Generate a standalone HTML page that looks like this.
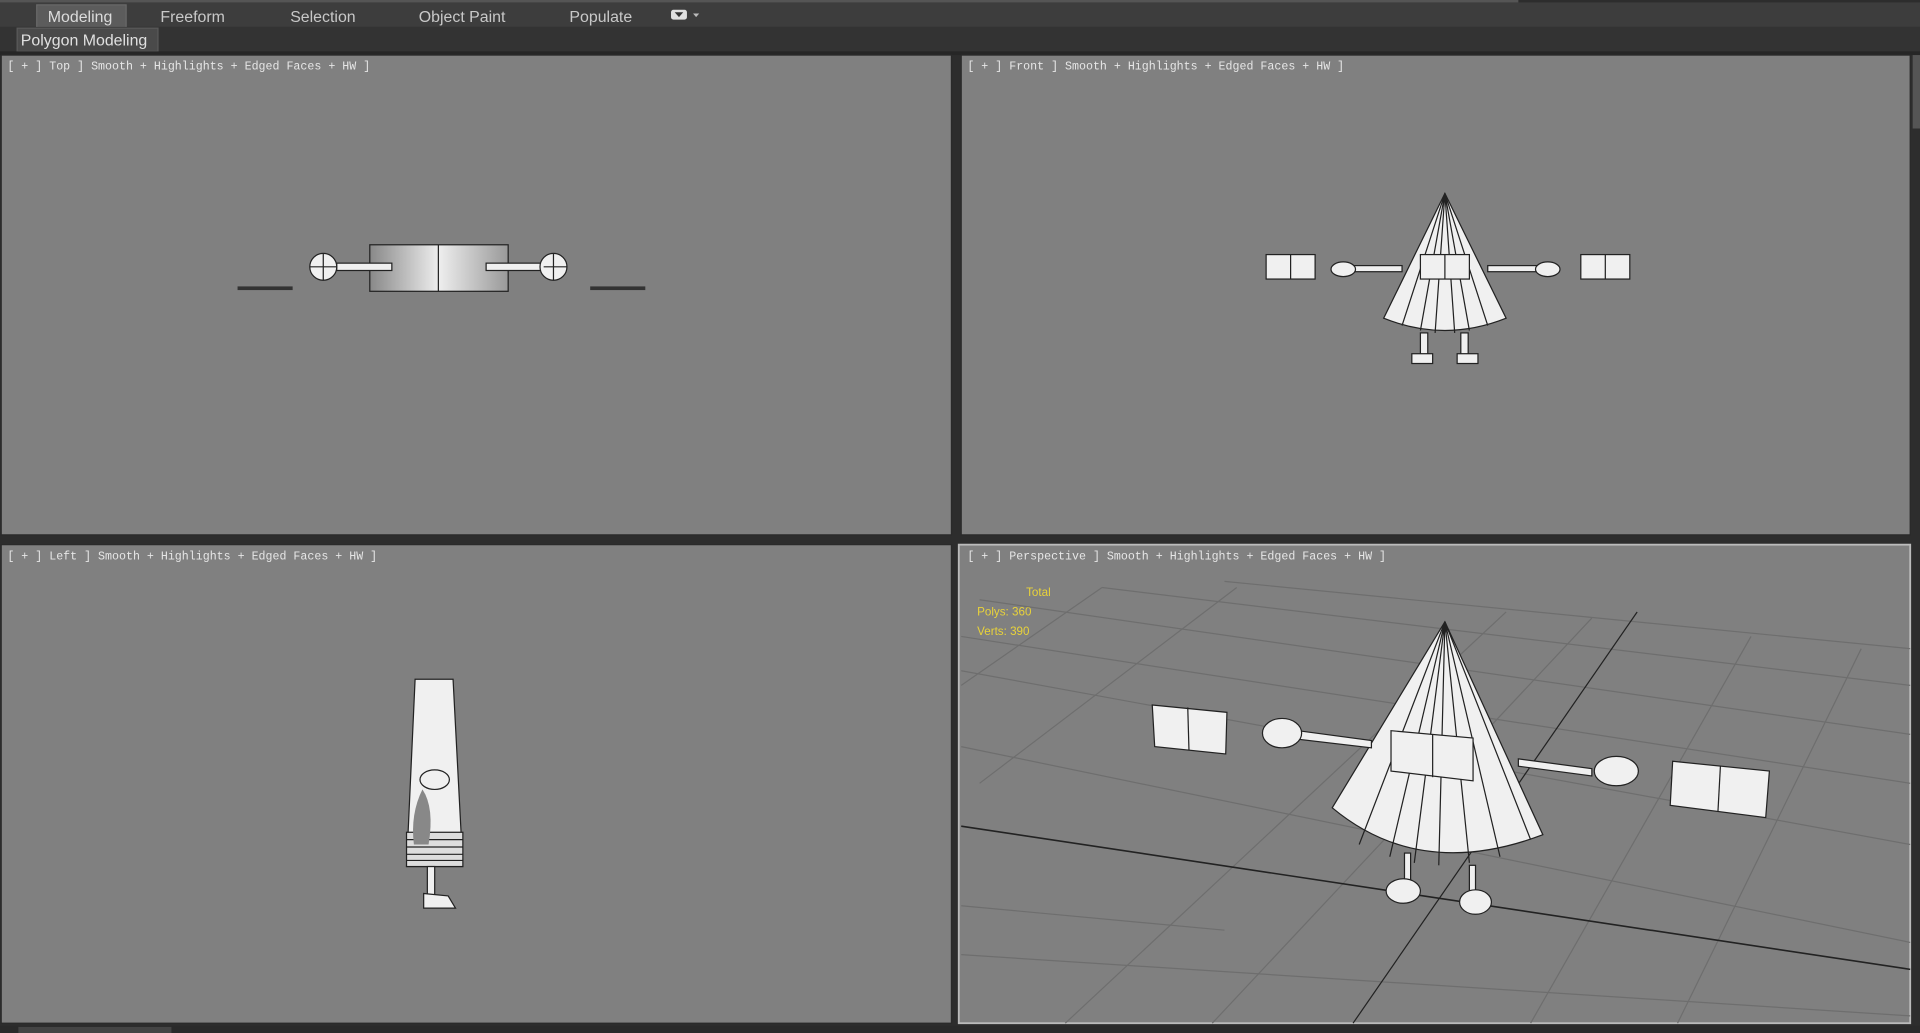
<!DOCTYPE html>
<html><head><meta charset="utf-8"><style>
html,body{margin:0;padding:0;background:#2e2e2e;overflow:hidden}
svg{display:block}
text{font-family:"Liberation Sans",sans-serif}
.lbl{font-family:"Liberation Mono",monospace;font-size:9.5px;fill:#e6e6e6}
.w{fill:#f0f0f0;stroke:#222;stroke-width:1}
.l{stroke:#222;stroke-width:1;fill:none}
.g{stroke:#6e6e6e;stroke-width:1;fill:none}
</style></head><body>
<svg width="1920" height="1033" viewBox="0 0 1568 844" preserveAspectRatio="none" xmlns="http://www.w3.org/2000/svg">
<rect width="1568" height="844" fill="#2d2d2d"/>
<!-- ribbon -->
<rect x="0" y="2" width="1568" height="20" fill="#3d3d3d"/>
<rect x="0" y="0" width="1240" height="2" fill="#555"/>
<rect x="30" y="4" width="73" height="19" fill="#5c5c5c" stroke="#6a6a6a"/>
<g font-size="13" fill="#c8c8c8">
<text x="39" y="18" fill="#dcdcdc">Modeling</text>
<text x="131" y="18">Freeform</text>
<text x="237" y="18">Selection</text>
<text x="342" y="18">Object Paint</text>
<text x="465" y="18">Populate</text>
</g>
<rect x="548" y="8" width="13" height="8" rx="2" fill="#e0e0e0"/>
<path d="M551 10 L558 10 L554.5 14Z" fill="#333"/>
<path d="M566 11 L571 11 L568.5 14Z" fill="#bbb"/>
<rect x="0" y="22" width="1568" height="20" fill="#333"/>
<rect x="14" y="23" width="115" height="19" fill="#4a4a4a" stroke="#5a5a5a"/>
<text x="17" y="37" font-size="13" fill="#e0e0e0">Polygon Modeling</text>
<rect x="0" y="42" width="1568" height="3" fill="#262626"/>
<!-- viewports -->
<rect x="1" y="45" width="776" height="392" fill="#808080" stroke="#2a2a2a"/>
<rect x="785" y="45" width="775" height="392" fill="#808080" stroke="#2a2a2a"/>
<rect x="1" y="445" width="776" height="391" fill="#808080" stroke="#2a2a2a"/>
<rect x="783" y="445" width="777" height="391" fill="#808080" stroke="#bbb" stroke-width="1.5"/>
<rect x="1562" y="45" width="6" height="60" fill="#555"/>
<text class="lbl" x="6" y="57">[ + ] Top ] Smooth + Highlights + Edged Faces + HW ]</text>
<text class="lbl" x="790" y="57">[ + ] Front ] Smooth + Highlights + Edged Faces + HW ]</text>
<text class="lbl" x="6" y="457">[ + ] Left ] Smooth + Highlights + Edged Faces + HW ]</text>
<text class="lbl" x="790" y="457">[ + ] Perspective ] Smooth + Highlights + Edged Faces + HW ]</text>
<g class="lbl" style="fill:#e8d23a"><text x="838" y="487">Total</text><text x="798" y="503">Polys: 360</text><text x="798" y="519">Verts: 390</text></g>
<!-- top view -->
<rect x="194" y="234" width="45" height="3" fill="#333"/><rect x="482" y="234" width="45" height="3" fill="#333"/>
<defs><linearGradient id="tg" x1="0" x2="1"><stop offset="0" stop-color="#888"/><stop offset="0.5" stop-color="#eee"/><stop offset="1" stop-color="#999"/></linearGradient></defs>
<rect x="302" y="200" width="113" height="38" fill="url(#tg)" stroke="#222"/>
<line class="l" x1="358" y1="200" x2="358" y2="238"/>
<rect x="275" y="215" width="45" height="6" class="w"/><rect x="397" y="215" width="45" height="6" class="w"/>
<circle cx="264" cy="218" r="11" class="w"/><circle cx="452" cy="218" r="11" class="w"/>
<path class="l" d="M253 218H275M264 207V229M444 218H463M452 207V229"/>
<!-- front view -->
<path class="w" d="M1180 158 L1130 260 Q1180 280 1230 260 Z"/>
<path class="l" d="M1180 158 L1145 266 M1180 158 L1160 270 M1180 158 L1172 272 M1180 158 L1188 272 M1180 158 L1200 270 M1180 158 L1215 266"/>
<rect x="1160" y="208" width="40" height="20" class="w"/><line class="l" x1="1180" y1="208" x2="1180" y2="228"/>
<rect x="1034" y="208" width="40" height="20" class="w"/><line class="l" x1="1054" y1="208" x2="1054" y2="228"/>
<rect x="1291" y="208" width="40" height="20" class="w"/><line class="l" x1="1311" y1="208" x2="1311" y2="228"/>
<rect x="1105" y="217" width="40" height="5" class="w"/><rect x="1215" y="217" width="40" height="5" class="w"/>
<ellipse cx="1097" cy="220" rx="10" ry="6" class="w"/><ellipse cx="1264" cy="220" rx="10" ry="6" class="w"/>
<rect x="1160" y="272" width="6" height="18" class="w"/><rect x="1193" y="272" width="6" height="18" class="w"/>
<rect x="1153" y="289" width="17" height="8" class="w"/><rect x="1190" y="289" width="17" height="8" class="w"/>
<!-- left view -->
<path class="w" d="M339 555 L370 555 L378 708 L332 708 Z"/>
<rect x="332" y="680" width="46" height="28" fill="#ddd" stroke="#222"/>
<path class="l" d="M332 686H378M332 692H378M332 698H378M332 703H378"/>
<path d="M345 645 Q355 660 350 690 L338 690 Q335 665 345 645Z" fill="#888"/>
<ellipse cx="355" cy="637" rx="12" ry="8" class="w"/>
<rect x="349" y="708" width="6" height="24" class="w"/>
<path class="w" d="M346 730 L366 732 L372 742 L346 742Z"/>
<!-- perspective grid -->
<g class="g">
<path d="M785 548 L1560 690 M785 610 L1560 770 M785 520 L1560 640 M800 490 L1560 600 M900 480 L1560 560 M1000 475 L1560 530"/>
<path d="M785 780 L1560 830 M785 740 L1000 760"/>
<path d="M870 836 L1230 500 M990 836 L1300 505 M1250 836 L1430 520 M1370 836 L1520 530 M800 640 L1010 480 M785 560 L900 480"/>
</g>
<path d="M785 675 L1560 792" stroke="#222" stroke-width="1.3"/>
<path d="M1105 836 L1337 500" stroke="#222" stroke-width="1"/>
<!-- perspective model -->
<path class="w" d="M1180 508 L1088 660 Q1160 720 1260 682 Z"/>
<path class="l" d="M1180 508 L1110 690 M1180 508 L1135 700 M1180 508 L1155 705 M1180 508 L1175 707 M1180 508 L1200 705 M1180 508 L1225 700 M1180 508 L1250 686"/>
<path class="w" d="M941 576 L1002 582 L1001 616 L943 610Z"/><line class="l" x1="970" y1="578" x2="971" y2="613"/>
<path class="w" d="M1366 622 L1445 630 L1442 668 L1364 658Z"/><line class="l" x1="1405" y1="626" x2="1403" y2="663"/>
<path class="w" d="M1136 597 L1203 603 L1203 638 L1136 630Z"/><line class="l" x1="1170" y1="600" x2="1170" y2="635"/>
<path class="w" d="M1060 597 L1120 605 L1120 611 L1060 604Z"/><path class="w" d="M1240 620 L1300 628 L1300 634 L1240 626Z"/>
<ellipse cx="1047" cy="599" rx="16" ry="12" class="w"/><ellipse cx="1320" cy="630" rx="18" ry="12" class="w"/>
<rect x="1147" y="697" width="5" height="22" class="w"/><rect x="1200" y="707" width="5" height="22" class="w"/>
<ellipse cx="1146" cy="728" rx="14" ry="10" class="w"/><ellipse cx="1205" cy="737" rx="13" ry="10" class="w"/>
<!-- bottom -->
<rect x="0" y="838" width="1568" height="6" fill="#2a2a2a"/>
<rect x="15" y="839" width="125" height="5" fill="#444"/>
</svg>
</body></html>
